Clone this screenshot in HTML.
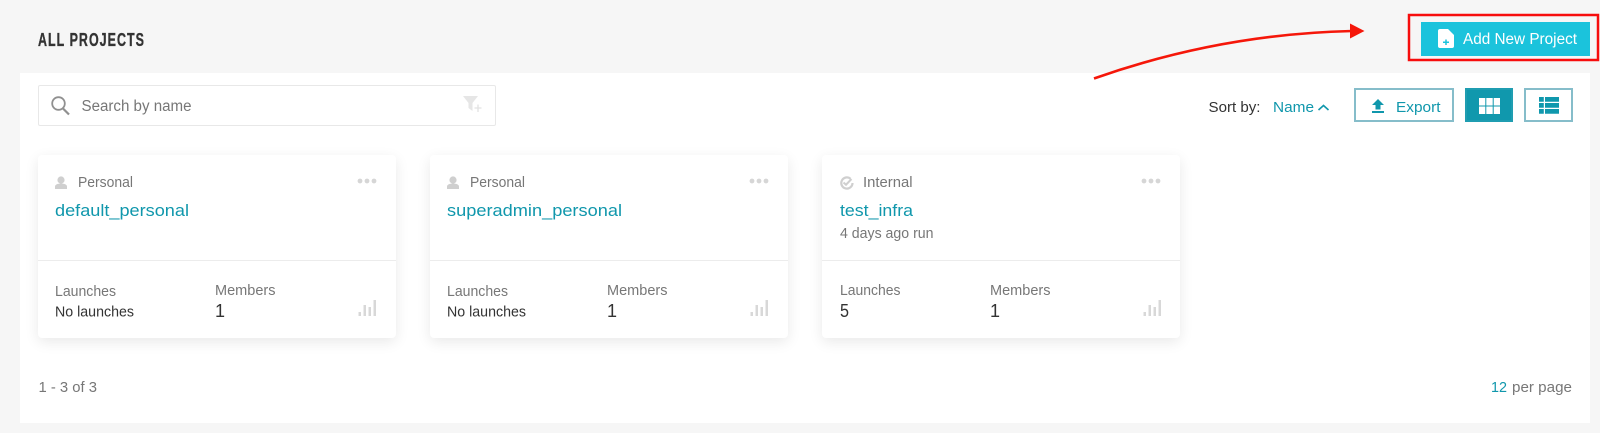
<!DOCTYPE html>
<html lang="en">
<head>
<meta charset="utf-8">
<title>All Projects</title>
<style>
html,body{margin:0;padding:0;width:1600px;height:433px;overflow:hidden;background:#f6f6f6}
#p{position:absolute;left:20px;top:73px;width:1570px;height:350px;background:#fff}
.s{position:absolute;left:38px;top:85px;width:456px;height:39px;border:1px solid #e8e8e8;border-radius:2px;background:#fff}
.c{position:absolute;top:155px;width:358px;height:183px;background:#fff;border-radius:4px;box-shadow:0 4px 14px rgba(0,0,0,.09)}
.c i{position:absolute;left:0;right:0;top:105px;height:1px;background:#ececec}
.b{position:absolute;box-sizing:border-box;top:88px;height:34px;border:2px solid #86bdca;background:#fff}
svg{position:absolute;left:0;top:0;filter:blur(.25px)}
text{font-family:"Liberation Sans",sans-serif;font-size:14.5px;fill:#777}
.t{fill:#1097ac;font-size:17px}
.n{fill:#333;font-size:18px}
.k{fill:#333}
.m{fill:#1097ac}
</style>
</head>
<body>
<div id="p"></div>
<div class="s"></div>
<div class="c" style="left:38px"><i></i></div>
<div class="c" style="left:430px"><i></i></div>
<div class="c" style="left:822px"><i></i></div>
<div class="b" style="left:1354px;width:100px"></div>
<div class="b" style="left:1465px;width:48px;background:#1098ad;border-color:#1f9db1"></div>
<div class="b" style="left:1524px;width:49px"></div>
<svg width="1600" height="433" viewBox="0 0 1600 433">
  <defs>
    <g id="person" fill="#cfcfcf"><circle cx="61" cy="180" r="3.6"/><path d="M55 189v-2.500c0-2 3-3 6-3s6 1 6 3v2.500z"/></g>
    <g id="dots" fill="#d6d6d6"><circle cx="360" cy="181" r="2.400"/><circle cx="367" cy="181" r="2.400"/><circle cx="374" cy="181" r="2.400"/></g>
    <g id="bars" fill="#d8d8d8"><rect x="358.500" y="312" width="2.500" height="4"/><rect x="363.500" y="305" width="2.500" height="11"/><rect x="368.500" y="307" width="2.500" height="9"/><rect x="373.500" y="300" width="2.500" height="16"/></g>
  </defs>

  <text x="38" y="46" textLength="107" lengthAdjust="spacingAndGlyphs" style="font-size:18px;font-weight:700;fill:#333;letter-spacing:1.500px;stroke:#333;stroke-width:.35px">ALL PROJECTS</text>

  <path d="M1094 78.500Q1220 34 1352 31" fill="none" stroke="#f5170a" stroke-width="2.600"/>
  <path d="M1350 23.500l14.500 7.500-14.500 7.500z" fill="#f5170a"/>

  <rect x="1409" y="15" width="189" height="45" fill="none" stroke="#f70d0d" stroke-width="2.500"/>
  <rect x="1421" y="22" width="169" height="34" fill="#1bc3dc"/>
  <path d="M1440 29h8l6 6v11a2 2 0 0 1-2 2h-12a2 2 0 0 1-2-2v-15a2 2 0 0 1 2-2z" fill="#fff"/>
  <path d="M1446 39.500v5.500M1443 42.200h6" stroke="#1bc3dc" stroke-width="1.500"/>
  <text x="1463" y="44" textLength="114" lengthAdjust="spacingAndGlyphs" style="font-size:15.500px;fill:#fff">Add New Project</text>

  <circle cx="58.500" cy="103.500" r="6.300" fill="none" stroke="#909090" stroke-width="1.800"/>
  <path d="M63 108.500l6 6" stroke="#909090" stroke-width="2.200"/>
  <text x="81.500" y="111" textLength="110" lengthAdjust="spacingAndGlyphs" style="font-size:15.500px">Search by name</text>
  <path d="M463 96h15l-5.500 7v8l-4-3v-5z" fill="#e6e6e6"/>
  <path d="M472.500 108h10M477.500 102.500v10" stroke="#fff" stroke-width="2.500"/>
  <path d="M474.500 108h7M478 104.500v7.500" stroke="#e2e2e2" stroke-width="1.300"/>

  <text x="1208.500" y="112" textLength="52" lengthAdjust="spacingAndGlyphs" class="k">Sort by:</text>
  <text x="1273" y="112" textLength="41" lengthAdjust="spacingAndGlyphs" class="m">Name</text>
  <path d="M1318.500 110l5-4.500 5 4.500" fill="none" stroke="#1097ac" stroke-width="1.600"/>

  <path d="M1378 99l6 6h-3.500v4.500h-5V105H1372z" fill="#1097ac"/>
  <rect x="1372" y="111" width="12" height="2" fill="#1097ac"/>
  <text x="1396" y="112" textLength="44.500" lengthAdjust="spacingAndGlyphs" class="m">Export</text>

  <path fill="#fff" d="M1479 98h6.300v7.500h-6.300zM1486.300 98h6.400v7.500h-6.400zM1493.700 98h6.300v7.500h-6.300zM1479 106.500h6.300v7.500h-6.300zM1486.300 106.500h6.400v7.500h-6.400zM1493.700 106.500h6.300v7.500h-6.300z"/>
  <path fill="#1098ad" d="M1539 97h4.800v4.800H1539zM1545 97h14v4.800h-14zM1539 103h4.800v4.800H1539zM1545 103h14v4.800h-14zM1539 109h4.800v4.800H1539zM1545 109h14v4.800h-14z"/>

  <use href="#person"/>
  <text x="78" y="187" textLength="55" lengthAdjust="spacingAndGlyphs">Personal</text>
  <use href="#dots"/>
  <text x="55" y="216" textLength="134" lengthAdjust="spacingAndGlyphs" class="t">default_personal</text>
  <text x="55" y="296" textLength="61" lengthAdjust="spacingAndGlyphs">Launches</text>
  <text x="55" y="316.500" textLength="79" lengthAdjust="spacingAndGlyphs" class="k">No launches</text>
  <text x="215" y="295" textLength="60.500" lengthAdjust="spacingAndGlyphs">Members</text>
  <text x="215" y="317" class="n">1</text>
  <use href="#bars"/>

  <use href="#person" x="392"/>
  <text x="470" y="187" textLength="55" lengthAdjust="spacingAndGlyphs">Personal</text>
  <use href="#dots" x="392"/>
  <text x="447" y="216" textLength="175" lengthAdjust="spacingAndGlyphs" class="t">superadmin_personal</text>
  <text x="447" y="296" textLength="61" lengthAdjust="spacingAndGlyphs">Launches</text>
  <text x="447" y="316.500" textLength="79" lengthAdjust="spacingAndGlyphs" class="k">No launches</text>
  <text x="607" y="295" textLength="60.500" lengthAdjust="spacingAndGlyphs">Members</text>
  <text x="607" y="317" class="n">1</text>
  <use href="#bars" x="392"/>

  <path d="M850.500 178.700a5.600 5.600 0 1 0 2 4.300" fill="none" stroke="#cfcfcf" stroke-width="2.200"/>
  <path d="M843.500 182.500l2.500 2.200 5.500-5.700" fill="none" stroke="#cfcfcf" stroke-width="2"/>
  <text x="863" y="187" textLength="49.500" lengthAdjust="spacingAndGlyphs">Internal</text>
  <use href="#dots" x="784"/>
  <text x="840" y="216" textLength="73" lengthAdjust="spacingAndGlyphs" class="t">test_infra</text>
  <text x="840" y="238" textLength="93.500" lengthAdjust="spacingAndGlyphs">4 days ago run</text>
  <text x="840" y="295" textLength="60.500" lengthAdjust="spacingAndGlyphs">Launches</text>
  <text x="840" y="317" textLength="9" lengthAdjust="spacingAndGlyphs" class="n">5</text>
  <text x="990" y="295" textLength="60.500" lengthAdjust="spacingAndGlyphs">Members</text>
  <text x="990" y="317" class="n">1</text>
  <use href="#bars" x="785"/>

  <text x="38.500" y="392" textLength="58.500" lengthAdjust="spacingAndGlyphs">1 - 3 of 3</text>
  <text x="1491" y="392" textLength="16" lengthAdjust="spacingAndGlyphs" class="m">12</text>
  <text x="1512" y="392" textLength="60" lengthAdjust="spacingAndGlyphs">per page</text>
</svg>
</body>
</html>
